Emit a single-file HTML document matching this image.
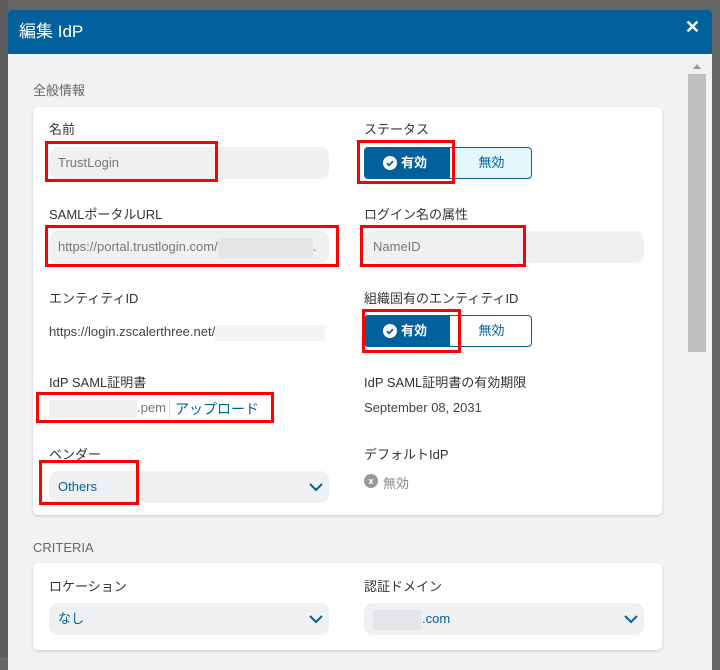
<!DOCTYPE html>
<html><head><meta charset="utf-8"><style>
*{box-sizing:border-box;margin:0;padding:0}
body{width:720px;height:657px;overflow:hidden;background:#666;font-family:"Liberation Sans","Noto Sans CJK JP",sans-serif;position:relative}
.a{position:absolute}
.modal{left:8px;top:10px;width:704px;height:660px;background:#f1f2f4;border-radius:3px 3px 0 0;overflow:hidden}
.hdr{left:8px;top:10px;width:704px;height:44px;background:#02609a;color:#fff;font-size:17px;line-height:44px;padding-left:11px;border-radius:3px 3px 0 0}
.card{background:#fff;border-radius:5px;box-shadow:0 1px 3px rgba(0,0,0,.15)}
.lbl{font-size:13px;color:#333}
.inp{background:#eff0f2;border-radius:9px;height:32px;font-size:13px;color:#777;line-height:32px;padding-left:9px}
.red{border:3px solid #f00}
.tog{height:32px;width:168px;border:1px solid #02609a;border-radius:4px;overflow:hidden;background:#e4f7fc}
.tog .on{position:absolute;left:0;top:0;width:85px;height:100%;background:#02609a;color:#fff;font-size:13px;font-weight:bold;line-height:30px;padding-left:36px}
.tog .off{position:absolute;left:85px;top:0;width:83px;height:100%;color:#02609a;font-size:13px;line-height:30px;text-align:center}
.chk{position:absolute;left:18px;top:8px;width:14px;height:14px;border-radius:50%;background:#fff}
.chk svg{display:block}
.sel{background:#eff0f2;border-radius:9px;height:32px;font-size:13px;color:#02609a;line-height:32px;padding-left:9px;width:280px}
.chev{position:absolute;right:6px;top:11px}
</style></head><body>
<div class="a" style="left:0;top:0;width:8px;height:657px;background:#5c5c5c"></div>
<div class="a modal"></div>
<div class="a hdr">編集 IdP</div>
<div class="a" style="left:685px;top:17px;color:#fff;font-size:18px;font-weight:bold">✕</div>
<div class="a" style="left:688px;top:58px;width:18px;height:600px;background:#f1f1f1"></div>
<div class="a" style="left:693px;top:64px;width:0;height:0;border-left:4px solid transparent;border-right:4px solid transparent;border-bottom:5px solid #999"></div>
<div class="a" style="left:688px;top:74px;width:18px;height:278px;background:#c1c1c1"></div>

<div class="a" style="left:33px;top:80px;font-size:13px;color:#666">全般情報</div>
<div class="a card" style="left:33px;top:107px;width:629px;height:408px"></div>

<div class="a lbl" style="left:49px;top:119px">名前</div>
<div class="a inp" style="left:49px;top:147px;width:280px">TrustLogin</div>
<div class="a red" style="left:45px;top:141px;width:173px;height:41px"></div>

<div class="a lbl" style="left:364px;top:119px">ステータス</div>
<div class="a tog" style="left:364px;top:147px"><div class="on"><div class="chk"><svg width="14" height="14"><path d="M4 7.2l2 2 4-4" stroke="#02609a" stroke-width="1.8" fill="none"/></svg></div>有効</div><div class="off">無効</div></div>
<div class="a red" style="left:357px;top:140px;width:98px;height:44px"></div>

<div class="a lbl" style="left:49px;top:204px">SAMLポータルURL</div>
<div class="a inp" style="left:49px;top:231px;width:280px">https://portal.trustlogin.com/<span style="display:inline-block;width:95px;height:20px;background:#e6e6e8;vertical-align:middle"></span>.</div>
<div class="a red" style="left:45px;top:225px;width:294px;height:42px"></div>

<div class="a lbl" style="left:364px;top:204px">ログイン名の属性</div>
<div class="a inp" style="left:364px;top:231px;width:280px">NameID</div>
<div class="a red" style="left:360px;top:225px;width:166px;height:42px"></div>

<div class="a lbl" style="left:49px;top:288px">エンティティID</div>
<div class="a" style="left:49px;top:324px;font-size:13px;color:#444">https://login.zscalerthree.net/<span style="display:inline-block;width:110px;height:16px;background:#f4f4f6;vertical-align:middle"></span></div>

<div class="a lbl" style="left:364px;top:288px">組織固有のエンティティID</div>
<div class="a tog" style="left:364px;top:315px;background:#fff"><div class="on"><div class="chk"><svg width="14" height="14"><path d="M4 7.2l2 2 4-4" stroke="#02609a" stroke-width="1.8" fill="none"/></svg></div>有効</div><div class="off">無効</div></div>
<div class="a red" style="left:362px;top:309px;width:99px;height:44px"></div>

<div class="a lbl" style="left:49px;top:372px">IdP SAML証明書</div>
<div class="a" style="left:49px;top:400px;width:88px;height:18px;background:#f0f0f2"></div>
<div class="a" style="left:137px;top:400px;font-size:13px;color:#777">.pem</div>
<div class="a" style="left:169px;top:399px;width:1px;height:20px;background:#ddd"></div>
<div class="a" style="left:175px;top:399px;font-size:14px;color:#02609a">アップロード</div>
<div class="a red" style="left:36px;top:392px;width:238px;height:31px"></div>

<div class="a lbl" style="left:364px;top:372px">IdP SAML証明書の有効期限</div>
<div class="a" style="left:364px;top:400px;font-size:13px;color:#444">September 08, 2031</div>

<div class="a lbl" style="left:49px;top:444px">ベンダー</div>
<div class="a sel" style="left:49px;top:471px">Others<svg class="chev" width="14" height="10"><path d="M1 2l6 6 6-6" stroke="#02609a" stroke-width="2" fill="none"/></svg></div>
<div class="a red" style="left:39px;top:460px;width:100px;height:45px"></div>

<div class="a lbl" style="left:364px;top:444px">デフォルトIdP</div>
<div class="a" style="left:364px;top:474px;width:14px;height:14px;border-radius:50%;background:#999;color:#fff;font-size:9px;line-height:14px;text-align:center;font-weight:bold">x</div>
<div class="a" style="left:383px;top:473px;font-size:13px;color:#888">無効</div>

<div class="a" style="left:33px;top:540px;font-size:13px;color:#666">CRITERIA</div>
<div class="a card" style="left:33px;top:563px;width:629px;height:87px"></div>
<div class="a lbl" style="left:49px;top:576px">ロケーション</div>
<div class="a sel" style="left:49px;top:603px">なし<svg class="chev" width="14" height="10"><path d="M1 2l6 6 6-6" stroke="#02609a" stroke-width="2" fill="none"/></svg></div>
<div class="a lbl" style="left:364px;top:576px">認証ドメイン</div>
<div class="a sel" style="left:364px;top:603px"><span style="display:inline-block;width:49px;height:20px;background:#e4e5e8;vertical-align:middle"></span>.com<svg class="chev" width="14" height="10"><path d="M1 2l6 6 6-6" stroke="#02609a" stroke-width="2" fill="none"/></svg></div>
</body></html>
